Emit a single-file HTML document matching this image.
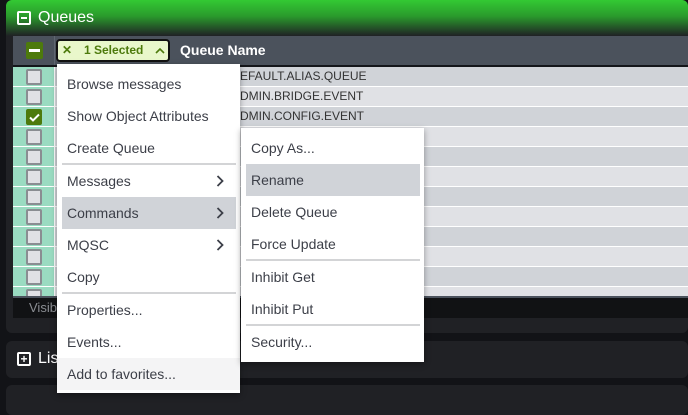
<!DOCTYPE html>
<html><head><style>
*{margin:0;padding:0;box-sizing:border-box}
body{width:688px;height:400px;background:#121317;font-family:"Liberation Sans",sans-serif;position:relative;overflow:hidden}
.abs{position:absolute}
.panel{position:absolute;left:6px;right:0;background:#202125;border-radius:6px}
.row{position:absolute;left:13px;right:0;height:19px;font-size:12px;color:#333;line-height:19px}
.cb{position:absolute;left:26px;width:16px;height:16px;background:#e0e1e5;border:2px solid #8a8d92;border-radius:2px}
.menu{position:absolute;background:#fff;box-shadow:0 2px 6px rgba(0,0,0,.35);font-size:14px;color:#3c3f48}
.it{position:absolute;left:5px;right:4px;height:32px;line-height:32px;padding-left:5px}
.hl{background:#d0d3d8}
.sep{position:absolute;left:5px;right:4px;height:2px;background:#d3d4d6}
.ch{position:absolute;right:12px;top:10px;width:8px;height:12px}
</style></head><body>
<div class="panel" style="top:0;height:333px;background:#202125;overflow:hidden">
 <div class="abs" style="left:0;right:0;top:0;height:36px;background:linear-gradient(#33c933,#2a9a2c 45%,#202125)"></div>
</div>
<div class="abs" style="left:17px;top:11px;width:14px;height:14px;border:2px solid #fff;border-radius:2px"><div class="abs" style="left:2px;top:4px;width:6px;height:2px;background:#fff"></div></div>
<div class="abs" style="left:38px;top:9px;color:#fff;font-size:16px">Queues</div>
<div class="abs" style="left:13px;right:0;top:36px;height:29px;background:#4b525c"></div>
<div class="abs" style="left:13px;right:0;top:65px;height:2px;background:#14161a"></div>
<div class="abs" style="left:54px;top:36px;width:1px;height:29px;background:#5f6670"></div>
<div class="abs" style="left:26px;top:42px;width:17px;height:17px;background:#4d7a0c;border-radius:2px"><div class="abs" style="left:3px;top:7px;width:11px;height:3px;background:#fff"></div></div>
<div class="abs" style="left:56px;top:39px;width:114px;height:23px;background:#e9f7cb;border:2px solid #111;border-radius:4px;font-size:12px;font-weight:bold;color:#4d7a0c;line-height:19px"><span style="position:absolute;left:4px">✕</span><span style="position:absolute;left:26px">1 Selected</span><svg style="position:absolute;left:97px;top:6px" width="10" height="7" viewBox="0 0 10 7"><path d="M1 6L5 2L9 6" fill="none" stroke="#4d7a0c" stroke-width="1.6"/></svg></div>
<div class="abs" style="left:180px;top:42px;color:#fff;font-size:14px;font-weight:bold">Queue Name</div>
<div class="abs" style="left:13px;right:0;top:67px;height:229px;background:#fff"></div>
<div class="abs" style="left:13px;width:41px;top:67px;height:229px;background:#9adbc1"></div>
<div id="rows"></div>
<script>
var t=["EFAULT.ALIAS.QUEUE","DMIN.BRIDGE.EVENT","DMIN.CONFIG.EVENT"];var h="";
for(var i=0;i<12;i++){var y=67+i*20;h+='<div class="row" style="top:'+y+'px;left:55px;background:'+(i%2?'#e0e1e5':'#d0d3d8')+'"><span style="position:absolute;left:185px">'+(i<3?t[i]:'')+'</span></div>';
h+='<div class="abs" style="left:13px;width:41px;top:'+(y+19)+'px;height:1px;background:#fff"></div>';
if(i==2)h+='<div class="cb" style="top:'+(y+2)+'px;background:#4d7a0c;border-color:#4d7a0c"><svg style="position:absolute;left:1px;top:2px" width="11" height="9" viewBox="0 0 11 9"><path d="M1 4.5L4 7.5L10 1.5" fill="none" stroke="#fff" stroke-width="2"/></svg></div>';else h+='<div class="cb" style="top:'+(y+2)+'px"></div>';}
document.getElementById('rows').innerHTML=h;
</script>
<div class="abs" style="left:13px;right:0;top:296px;height:2px;background:#4b525c"></div>
<div class="abs" style="left:13px;right:0;top:298px;height:20px;background:#111214;color:#8a8d92;font-size:13px;line-height:20px;padding-left:16px">Visible</div>
<div class="panel" style="top:341px;height:37px"></div>
<div class="abs" style="left:17px;top:352px;width:14px;height:14px;border:2px solid #fff;border-radius:2px;color:#fff;font-size:12px;line-height:10px;text-align:center;font-weight:bold">+</div>
<div class="abs" style="left:38px;top:350px;color:#fff;font-size:16px">List</div>
<div class="panel" style="top:385px;height:30px"></div>
<div class="menu" style="left:57px;top:64px;width:183px;height:329px">
 <div class="it" style="top:4px">Browse messages</div>
 <div class="it" style="top:36px">Show Object Attributes</div>
 <div class="it" style="top:68px">Create Queue</div>
 <div class="sep" style="top:99px"></div>
 <div class="it" style="top:101px">Messages<svg class="ch" viewBox="0 0 8 12"><path d="M1.5 1L6.5 6L1.5 11" fill="none" stroke="#3c3f48" stroke-width="1.8"/></svg></div>
 <div class="it hl" style="top:133px">Commands<svg class="ch" viewBox="0 0 8 12"><path d="M1.5 1L6.5 6L1.5 11" fill="none" stroke="#3c3f48" stroke-width="1.8"/></svg></div>
 <div class="it" style="top:165px">MQSC<svg class="ch" viewBox="0 0 8 12"><path d="M1.5 1L6.5 6L1.5 11" fill="none" stroke="#3c3f48" stroke-width="1.8"/></svg></div>
 <div class="it" style="top:197px">Copy</div>
 <div class="sep" style="top:228px"></div>
 <div class="it" style="top:230px">Properties...</div>
 <div class="it" style="top:262px">Events...</div>
 <div class="it" style="top:294px;left:0;right:0;padding-left:10px;background:#f4f4f5">Add to favorites...</div>
</div>
<div class="menu" style="left:241px;top:128px;width:183px;height:234px">
 <div class="it" style="top:4px">Copy As...</div>
 <div class="it hl" style="top:36px">Rename</div>
 <div class="it" style="top:68px">Delete Queue</div>
 <div class="it" style="top:100px">Force Update</div>
 <div class="sep" style="top:131px"></div>
 <div class="it" style="top:133px">Inhibit Get</div>
 <div class="it" style="top:165px">Inhibit Put</div>
 <div class="sep" style="top:196px"></div>
 <div class="it" style="top:198px">Security...</div>
</div>
</body></html>
